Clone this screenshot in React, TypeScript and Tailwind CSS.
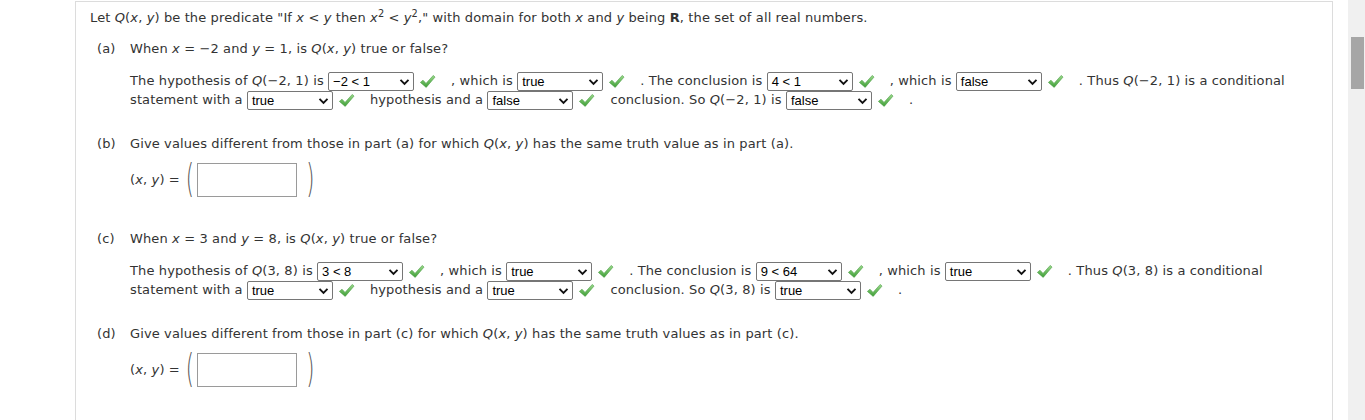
import React from 'react';

// small green check shown after each graded dropdown
const Check: React.FC = () => (
  <svg width="17" height="15" viewBox="0 0 17 15" className="inline-block ml-[5px] mr-[15px] align-middle">
    <defs>
      <linearGradient id="ck" x1="0" y1="0" x2="0" y2="1">
        <stop offset="0" stopColor="#9ad88a" />
        <stop offset="1" stopColor="#3f9f37" />
      </linearGradient>
    </defs>
    <path
      d="M1.4 8.4 L4 6.2 L7 9.4 L14.3 1.4 L16 3.1 L7.2 13.4 Z"
      fill="url(#ck)"
      stroke="#479c40"
      strokeWidth="0.6"
      strokeLinejoin="round"
    />
  </svg>
);

const Sel: React.FC<{ value: string }> = ({ value }) => (
  <span className="inline-flex items-center justify-between h-[19px] w-[86px] border border-[#767676] rounded-[2px] bg-white pl-[4px] pr-[3px] align-middle text-[13px] leading-none tracking-normal text-black font-['Liberation_Sans',Arial,sans-serif]">
    <span>{value}</span>
    <svg width="11" height="8" viewBox="0 0 11 8">
      <path d="M1.5 1.8 L5.5 5.8 L9.5 1.8" fill="none" stroke="#111" strokeWidth="1.9" />
    </svg>
  </span>
);

const Graded: React.FC<{ value: string }> = ({ value }) => (
  <>
    <Sel value={value} />
    <Check />
  </>
);

const Answer: React.FC = () => (
  <div className="flex items-center h-[40px] mt-[6px] pl-[40px]">
    <span className="text-[13px] text-[#333]">
      (<i>x</i>, <i>y</i>) =
    </span>
    <span className="inline-block ml-[6px] text-[21px] font-extralight scale-y-[1.9] text-[#555]">(</span>
    <span className="inline-block ml-[3px] w-[100px] h-[34px] border border-[#9a9a9a] bg-white" />
    <span className="inline-block ml-[9px] text-[21px] font-extralight scale-y-[1.9] text-[#555]">)</span>
  </div>
);

const Part: React.FC<{ label: string; children: React.ReactNode; className?: string }> = ({ label, children, className }) => (
  <div className={`flex h-[20px] items-center pl-[7px] whitespace-nowrap ${className ?? ''}`}>
    <span className="w-[33px]">{label}</span>
    <span>{children}</span>
  </div>
);

export default function App() {
  return (
    <div className="flex h-[420px] bg-white overflow-hidden text-[13px] tracking-[0.12px] text-[#333] font-['DejaVu_Sans',Verdana,sans-serif]">
      <div className="w-[75px] shrink-0" />
      <div className="w-[1258px] shrink-0 mt-px border-l border-t border-r border-[#dcdcdc] pl-[14px] pt-[6px]">
        <div className="h-[20px] leading-[20px] whitespace-nowrap">
          Let <i>Q</i>(<i>x</i>, <i>y</i>) be the predicate "If <i>x</i> &lt; <i>y</i> then <i>x</i>
          <sup>2</sup> &lt; <i>y</i>
          <sup>2</sup>," with domain for both <i>x</i> and <i>y</i> being <b>R</b>, the set of all real numbers.
        </div>

        {/* part (a) */}
        <Part label="(a)" className="mt-[11px]">
          When <i>x</i> = −2 and <i>y</i> = 1, is <i>Q</i>(<i>x</i>, <i>y</i>) true or false?
        </Part>
        <div className="pl-[40px] mt-[12px]">
          <div className="h-[19px] leading-[19px] whitespace-nowrap">
            The hypothesis of <i>Q</i>(−2, 1) is <Graded value="−2 < 1" />, which is <Graded value="true" />. The conclusion is{' '}
            <Graded value="4 < 1" />, which is <Graded value="false" />. Thus <i>Q</i>(−2, 1) is a conditional
          </div>
          <div className="h-[19px] leading-[19px] whitespace-nowrap">
            statement with a <Graded value="true" />hypothesis and a <Graded value="false" />conclusion. So <i>Q</i>(−2, 1) is{' '}
            <Graded value="false" />.
          </div>
        </div>

        {/* part (b) */}
        <Part label="(b)" className="mt-[25px]">
          Give values different from those in part (a) for which <i>Q</i>(<i>x</i>, <i>y</i>) has the same truth value as in part (a).
        </Part>
        <Answer />

        {/* part (c) */}
        <Part label="(c)" className="mt-[29px]">
          When <i>x</i> = 3 and <i>y</i> = 8, is <i>Q</i>(<i>x</i>, <i>y</i>) true or false?
        </Part>
        <div className="pl-[40px] mt-[12px]">
          <div className="h-[19px] leading-[19px] whitespace-nowrap">
            The hypothesis of <i>Q</i>(3, 8) is <Graded value="3 < 8" />, which is <Graded value="true" />. The conclusion is{' '}
            <Graded value="9 < 64" />, which is <Graded value="true" />. Thus <i>Q</i>(3, 8) is a conditional
          </div>
          <div className="h-[19px] leading-[19px] whitespace-nowrap">
            statement with a <Graded value="true" />hypothesis and a <Graded value="true" />conclusion. So <i>Q</i>(3, 8) is{' '}
            <Graded value="true" />.
          </div>
        </div>

        {/* part (d) */}
        <Part label="(d)" className="mt-[25px]">
          Give values different from those in part (c) for which <i>Q</i>(<i>x</i>, <i>y</i>) has the same truth values as in part (c).
        </Part>
        <Answer />
      </div>
      <div className="w-[15px] shrink-0" />
      {/* fake scrollbar */}
      <div className="w-[17px] shrink-0 bg-[#f0f0f0] pt-[37px] pl-[3px]">
        <div className="w-[13px] h-[52px] bg-[#a6a6a6]" />
      </div>
    </div>
  );
}
